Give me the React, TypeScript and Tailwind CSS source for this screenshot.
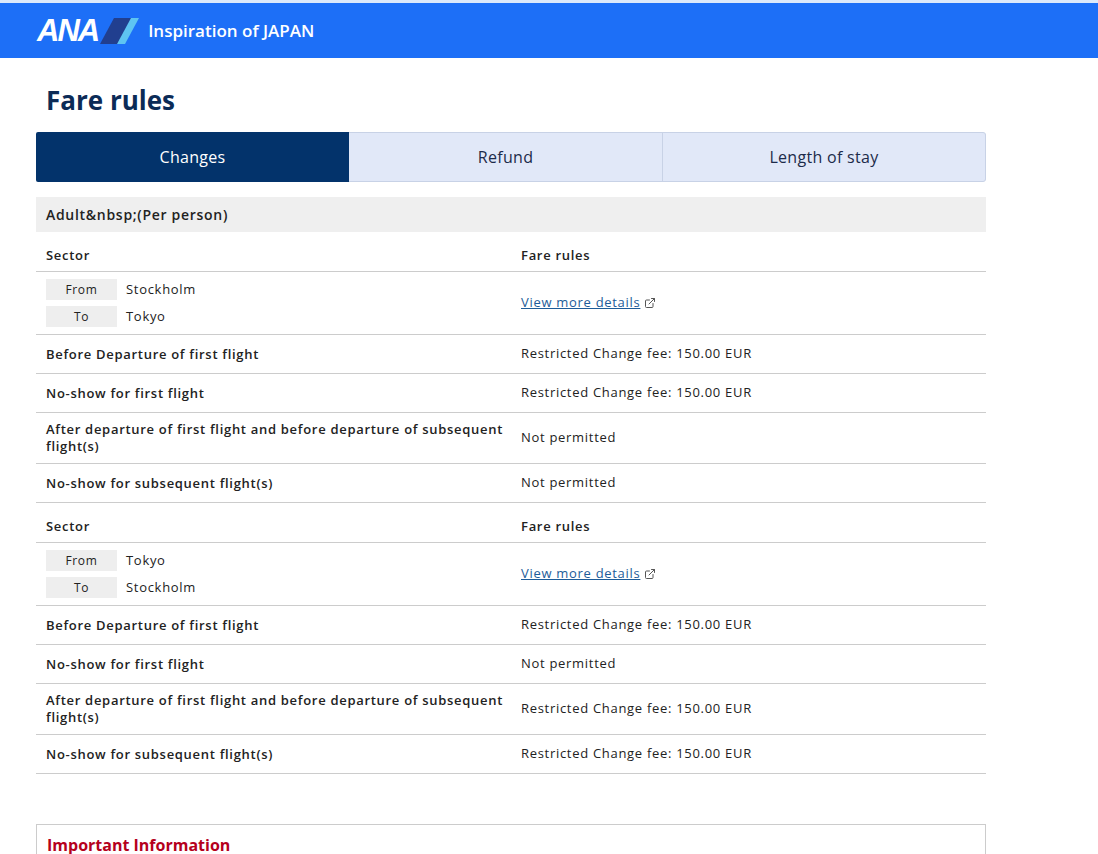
import { ExternalLink } from "lucide-react";

type Row = { label: string; value: string };

type Sector = { from: string; to: string; rows: Row[] };

const sectors: Sector[] = [
  {
    from: "Stockholm",
    to: "Tokyo",
    rows: [
      { label: "Before Departure of first flight", value: "Restricted Change fee: 150.00 EUR" },
      { label: "No-show for first flight", value: "Restricted Change fee: 150.00 EUR" },
      {
        label: "After departure of first flight and before departure of subsequent flight(s)",
        value: "Not permitted",
      },
      { label: "No-show for subsequent flight(s)", value: "Not permitted" },
    ],
  },
  {
    from: "Tokyo",
    to: "Stockholm",
    rows: [
      { label: "Before Departure of first flight", value: "Restricted Change fee: 150.00 EUR" },
      { label: "No-show for first flight", value: "Not permitted" },
      {
        label: "After departure of first flight and before departure of subsequent flight(s)",
        value: "Restricted Change fee: 150.00 EUR",
      },
      { label: "No-show for subsequent flight(s)", value: "Restricted Change fee: 150.00 EUR" },
    ],
  },
];

function Logo() {
  return (
    <div className="flex items-center">
      <span className="font-['Liberation_Sans',sans-serif] text-[31px] font-black italic leading-none tracking-[-2px] text-white">
        ANA
      </span>
      <svg width="40" height="26" viewBox="0 0 40 26" className="ml-[2px]">
        <polygon points="30,0 39,0 25,26 16,26" fill="#5ec4f2" />
        <polygon points="14,0 31,0 17,26 0,26" fill="#213f8f" />
      </svg>
    </div>
  );
}

function SectorBlock({ sector }: { sector: Sector }) {
  return (
    <>
      {/* sector header */}
      <div className="flex h-[40px] items-center border-b border-[#cccccc] pt-[9px] text-[13px] font-semibold text-[#222]">
        <div className="w-[475px] pl-[10px]">Sector</div>
        <div className="pl-[10px]">Fare rules</div>
      </div>

      {/* from / to */}
      <div className="flex h-[63px] items-center border-b border-[#cccccc] text-[13px] text-[#222]">
        <div className="flex w-[475px] flex-col gap-[6px] pl-[10px]">
          <div className="flex items-center">
            <span className="flex h-[21px] w-[71px] items-center justify-center bg-[#eeeeee] text-[12px]">From</span>
            <span className="ml-[9px]">{sector.from}</span>
          </div>
          <div className="flex items-center">
            <span className="flex h-[21px] w-[71px] items-center justify-center bg-[#eeeeee] text-[12px]">To</span>
            <span className="ml-[9px]">{sector.to}</span>
          </div>
        </div>
        <div className="flex items-center pl-[10px]">
          <a href="#" className="text-[#1d5c99] underline">
            View more details
          </a>
          <ExternalLink className="ml-[4px] h-[12px] w-[12px] text-[#555]" strokeWidth={2} />
        </div>
      </div>

      {sector.rows.map((row) => (
        <div
          key={row.label}
          className="flex min-h-[39px] items-center border-b border-[#cccccc] py-[8px] text-[13px] text-[#222]"
        >
          <div className="w-[475px] break-all pl-[10px] pr-[4px] font-semibold leading-[17px]">{row.label}</div>
          <div className="pl-[10px]">{row.value}</div>
        </div>
      ))}
    </>
  );
}

export default function App() {
  return (
    <div className="min-h-screen bg-white font-['Open_Sans',sans-serif]">
      <div className="h-[3px] bg-[#dce9fb]" />
      <header className="flex h-[55px] items-center bg-[#1d6ff7] pl-[37px]">
        <Logo />
        <span className="ml-[8px] text-[17px] font-semibold text-white">Inspiration of JAPAN</span>
      </header>

      <div className="ml-[36px] w-[950px] pb-10">
        <h1 className="pl-[10px] pt-[24px] text-[26px] font-bold leading-[36px] text-[#0b2b57]">Fare rules</h1>

        <div className="tracking-[0.7px]">
          {/* tabs */}
          <div className="mt-[14px] flex h-[50px] overflow-hidden rounded-[2px] text-[16px] tracking-[0.3px]">
            <div className="flex w-[313px] items-center justify-center bg-[#03336b] text-white">Changes</div>
            <div className="flex w-[314px] items-center justify-center border-y border-r border-[#c8d2e6] bg-[#e1e8f8] text-[#1c2b4a]">
              Refund
            </div>
            <div className="flex flex-1 items-center justify-center rounded-r-[3px] border-y border-r border-[#c8d2e6] bg-[#e1e8f8] text-[#1c2b4a]">
              Length of stay
            </div>
          </div>

          <div className="mt-[15px] flex h-[35px] items-center bg-[#efefef] pl-[10px] text-[14px] font-semibold text-[#222]">
            Adult&amp;nbsp;(Per person)
          </div>

          {sectors.map((s) => (
            <SectorBlock key={s.from} sector={s} />
          ))}
        </div>

        <div className="mt-[50px] border border-[#cccccc] px-[10px] pt-[8px] pb-[20px]">
          <h2 className="text-[16px] font-bold text-[#b5001c]">Important Information</h2>
        </div>
      </div>
    </div>
  );
}
